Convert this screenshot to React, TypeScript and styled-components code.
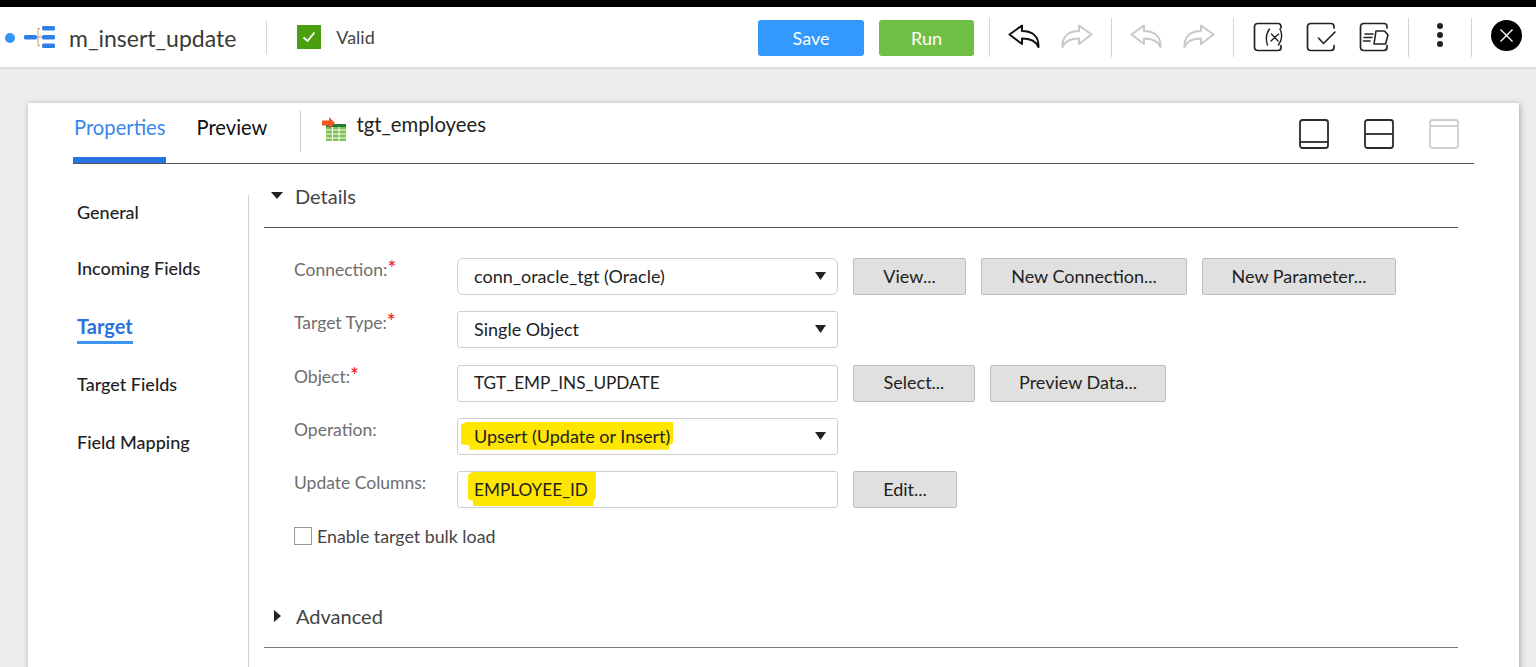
import React from "react";
import styled, { createGlobalStyle } from "styled-components";

const GlobalStyle = createGlobalStyle`
  html, body {
    margin: 0;
    padding: 0;
    background: #ededed;
    font-family: "Lato", "Open Sans", sans-serif;
    overflow: hidden;
  }
`;

const navItems = ["General", "Incoming Fields", "Target", "Target Fields", "Field Mapping"];

const Arrow = ({ flip, muted }: { flip?: boolean; muted?: boolean }) => (
  <IconSvg width="32" height="30" viewBox="0 0 32 30" fill="none" stroke={muted ? "#c9c9c9" : "#111"} strokeWidth="2" strokeLinejoin="round">
    <g transform={flip ? "translate(32 0) scale(-1 1)" : undefined}>
      <path d="M1.5 12.5 L14 3.5 V9 C24 9 31 14 30.5 25 C28 19 22 16.5 14 16.5 V22 Z" />
    </g>
  </IconSvg>
);

const ToolFrame = ({ children }: { children: React.ReactNode }) => (
  <IconSvg width="30" height="30" viewBox="0 0 30 30" fill="none" stroke="#222" strokeWidth="1.7" strokeLinecap="round" strokeLinejoin="round">
    <path d="M28 6 V4.5 C28 2.5 27 1.5 25 1.5 H5 C3 1.5 1.5 3 1.5 5 V25 C1.5 27 3 28.5 5 28.5 H25 C27 28.5 28 27.5 28 25.5 V23.5" />
    {children}
  </IconSvg>
);

const PanelLayout = ({ bar, muted }: { bar: number; muted?: boolean }) => (
  <IconSvg width="30" height="30" viewBox="0 0 30 30" fill="none" stroke={muted ? "#cfcfcf" : "#2b2b2b"} strokeWidth="1.8">
    <rect x="1" y="1" width="28" height="28" rx="2.5" />
    <path d={`M1 ${bar} H29`} />
  </IconSvg>
);

const Caret = () => (
  <CaretSvg width="11" height="8" viewBox="0 0 11 8">
    <path d="M0 0 H11 L5.5 8 Z" fill="#222" />
  </CaretSvg>
);

export default function App() {
  return (
    <Page>
      <GlobalStyle />
      <BlackStrip />
      <Header>
        <Dot />
        <IconSvg width="31" height="24" viewBox="0 0 31 24" style={{ marginLeft: 9 }}>
          <path d="M8 12 H19 M16 3.5 H14 V20.5 H16" stroke="#f08a5d" strokeWidth="1" fill="none" />
          <rect x="0" y="10" width="13" height="4.5" rx="1.5" fill="#2f7fe6" />
          <rect x="18" y="1" width="13" height="4.5" rx="1.5" fill="#2f7fe6" />
          <rect x="18" y="10" width="13" height="4.5" rx="1.5" fill="#2f7fe6" />
          <rect x="18" y="18.5" width="13" height="4.5" rx="1.5" fill="#2f7fe6" />
        </IconSvg>
        <MappingName>m_insert_update</MappingName>
        <Divider $left={30} $height={33} />
        <ValidBox>
          <svg width="14" height="12" viewBox="0 0 14 12" fill="none" stroke="#fff" strokeWidth="1.8">
            <path d="M1.5 6.5 L5.5 10 L12.5 1.5" />
          </svg>
        </ValidBox>
        <ValidText>Valid</ValidText>
        <ActionButton $bg="#3399ff" $width={106} style={{ marginLeft: "auto" }}>Save</ActionButton>
        <ActionButton $bg="#70bf45" $width={95} $left={15}>Run</ActionButton>
        <Divider $left={15} />
        <ToolSlot $left={18}><Arrow /></ToolSlot>
        <ToolSlot $left={21}><Arrow flip muted /></ToolSlot>
        <Divider $left={18} />
        <ToolSlot $left={18}><Arrow muted /></ToolSlot>
        <ToolSlot $left={21}><Arrow flip muted /></ToolSlot>
        <Divider $left={18} />
        <ToolSlot $left={19}>
          <ToolFrame>
            <path d="M16.5 7 C13.5 11 12.5 17 14.5 23 M27 7 C29.5 12 29 18 25.5 23 M18.5 12 L25 19 M25.5 12 L18 19" strokeWidth="1.4" />
          </ToolFrame>
        </ToolSlot>
        <ToolSlot $left={23}>
          <ToolFrame>
            <path d="M12.5 16 L17.5 21.5 L29 10" strokeWidth="1.6" />
          </ToolFrame>
        </ToolSlot>
        <ToolSlot $left={23}>
          <ToolFrame>
            <path d="M6 12 H14 M5 15.5 H13 M4.5 19 H11 M17 9 H25.5 L29 13 L26.5 22 H15 Z" strokeWidth="1.6" />
          </ToolFrame>
        </ToolSlot>
        <Divider $left={19} />
        <Kebab><i /><i /><i /></Kebab>
        <Divider $left={28} />
        <CloseButton>
          <svg width="15" height="15" viewBox="0 0 15 15" stroke="#fff" strokeWidth="1.4">
            <path d="M1.5 1.5 L13.5 13.5 M13.5 1.5 L1.5 13.5" />
          </svg>
        </CloseButton>
      </Header>

      <Card>
        <TabBar>
          <Tab $active>Properties</Tab>
          <Tab>Preview</Tab>
          <TabDivider />
          <IconSvg width="24" height="24" viewBox="0 0 24 24" style={{ alignSelf: "flex-start", marginTop: 14 }}>
            <rect x="4" y="7" width="20" height="17" fill="#7cc04f" />
            <path d="M4 7 H24 V10 H4 Z" fill="#217a3c" />
            <path d="M4 13 H24 M4 17 H24 M4 21 H24 M10.5 10 V24 M17 10 V24" stroke="#fff" strokeWidth="1" />
            <path d="M0 3.5 H7 V0 L13 6 L7 12 V8.5 H0 Z" fill="#f0581f" />
          </IconSvg>
          <ObjectName>tgt_employees</ObjectName>
          <LayoutIcons>
            <PanelLayout bar={23} />
            <PanelLayout bar={15} />
            <PanelLayout bar={7} muted />
          </LayoutIcons>
        </TabBar>

        <Body>
          <SideNav>
            {navItems.map((item) => (
              <NavItem key={item} $active={item === "Target"}>{item}</NavItem>
            ))}
          </SideNav>
          <Content>
            <SectionHead>
              <svg width="12" height="7" viewBox="0 0 12 7"><path d="M0 0 H12 L6 7 Z" fill="#222" /></svg>
              <SectionTitle>Details</SectionTitle>
            </SectionHead>
            <Form>
              <FormRow>
                <FieldLabel>Connection:<Req>*</Req></FieldLabel>
                <Field $round>conn_oracle_tgt (Oracle)<Caret /></Field>
                <GreyButton $width={113}>View...</GreyButton>
                <GreyButton $width={206}>New Connection...</GreyButton>
                <GreyButton $width={194}>New Parameter...</GreyButton>
              </FormRow>
              <FormRow>
                <FieldLabel>Target Type:<Req>*</Req></FieldLabel>
                <Field>Single Object<Caret /></Field>
              </FormRow>
              <FormRow>
                <FieldLabel>Object:<Req>*</Req></FieldLabel>
                <Field><Caps>TGT_EMP_INS_UPDATE</Caps></Field>
                <GreyButton $width={122}>Select...</GreyButton>
                <GreyButton $width={176}>Preview Data...</GreyButton>
              </FormRow>
              <FormRow>
                <FieldLabel>Operation:</FieldLabel>
                <Field><Marker $pad="3px 3px 3px 13px" $shift={-13}>Upsert (Update or Insert)</Marker><Caret /></Field>
              </FormRow>
              <FormRow>
                <FieldLabel>Update Columns:</FieldLabel>
                <Field><Marker $pad="6px 8px 6px 6px" $shift={-6}><Caps>EMPLOYEE_ID</Caps></Marker></Field>
                <GreyButton $width={104}>Edit...</GreyButton>
              </FormRow>
            </Form>
            <CheckRow>
              <CheckBox />
              <span>Enable target bulk load</span>
            </CheckRow>
            <AdvancedHead>
              <svg width="7" height="12" viewBox="0 0 7 12"><path d="M0 0 V12 L7 6 Z" fill="#222" /></svg>
              <SectionTitle>Advanced</SectionTitle>
            </AdvancedHead>
          </Content>
        </Body>
      </Card>
    </Page>
  );
}

const Page = styled.div`
  height: 667px;
  overflow: hidden;
  background: #ededed;
`;

const BlackStrip = styled.div`
  height: 7px;
  background: #000;
`;

const Header = styled.header`
  display: flex;
  align-items: center;
  height: 62px;
  padding: 0 14px 0 5px;
  box-sizing: border-box;
  background: #fff;
  border-bottom: 2px solid #dcdcdc;
`;

const IconSvg = styled.svg`
  display: block;
  flex: none;
`;

const Dot = styled.span`
  width: 10px;
  height: 10px;
  border-radius: 50%;
  background: #3395f5;
  flex: none;
  margin-top: 2px;
`;

const MappingName = styled.span`
  margin: 2px 0 0 14px;
  font-size: 23px;
  color: #3a3a3a;
`;

const Divider = styled.span<{ $left: number; $height?: number }>`
  width: 1px;
  height: ${(p) => p.$height ?? 39}px;
  margin-left: ${(p) => p.$left}px;
  background: #d4d4d4;
  flex: none;
`;

const ValidBox = styled.span`
  display: flex;
  align-items: center;
  justify-content: center;
  width: 24px;
  height: 24px;
  margin-left: 30px;
  background: #4a9e10;
  flex: none;
`;

const ValidText = styled.span`
  margin: 0 0 0 15px;
  font-size: 18px;
  color: #444;
`;

const ActionButton = styled.button<{ $bg: string; $width: number; $left?: number }>`
  width: ${(p) => p.$width}px;
  height: 36px;
  margin-left: ${(p) => p.$left ?? 0}px;
  margin-top: 2px;
  border: none;
  border-radius: 3px;
  background: ${(p) => p.$bg};
  color: #fff;
  font: inherit;
  font-size: 18px;
  flex: none;
`;

const ToolSlot = styled.span<{ $left: number }>`
  margin-left: ${(p) => p.$left}px;
  flex: none;
`;

const Kebab = styled.span`
  display: flex;
  flex-direction: column;
  gap: 3px;
  margin: -5px 0 0 28px;
  flex: none;

  i {
    display: block;
    width: 6px;
    height: 6px;
    border-radius: 50%;
    background: #222;
  }
`;

const CloseButton = styled.span`
  display: flex;
  align-items: center;
  justify-content: center;
  width: 31px;
  height: 31px;
  margin: -3px 0 0 19px;
  border-radius: 50%;
  background: #000;
  flex: none;
`;

const Card = styled.main`
  display: flex;
  flex-direction: column;
  margin: 34px 17px 0 28px;
  height: 600px;
  padding: 0 45px 0 45px;
  background: #fff;
  box-shadow: 1px 1px 6px rgba(0, 0, 0, 0.3);
`;

const TabBar = styled.div`
  display: flex;
  align-items: flex-start;
  height: 61px;
  box-sizing: border-box;
  border-bottom: 1px solid #555;
`;

const Tab = styled.div<{ $active?: boolean }>`
  height: 60px;
  padding: 9px 1px 0;
  box-sizing: border-box;
  margin-right: 29px;
  font-size: 20.2px;
  line-height: 30px;
  color: ${(p) => (p.$active ? "#3a86e8" : "#111")};
  border-bottom: ${(p) => (p.$active ? "6px solid #2a72e0" : "none")};
`;

const TabDivider = styled.span`
  width: 1px;
  height: 41px;
  margin: 8px 21px 0 3px;
  background: #c8c8c8;
`;

const ObjectName = styled.span`
  margin: 6px 0 0 10px;
  font-size: 20.3px;
  line-height: 30px;
  color: #222;
`;

const LayoutIcons = styled.div`
  display: flex;
  gap: 35px;
  margin: 16px 15px 0 auto;
`;

const Body = styled.div`
  display: flex;
  flex: 1;
`;

const SideNav = styled.nav`
  display: flex;
  flex-direction: column;
  align-items: flex-start;
  gap: 32px;
  width: 176px;
  margin-top: 31px;
  padding: 4px 0 0 4px;
  box-sizing: border-box;
  border-right: 1px solid #d4d4d4;
`;

const NavItem = styled.a<{ $active?: boolean }>`
  font-size: ${(p) => (p.$active ? 20 : 18)}px;
  line-height: 26px;
  color: ${(p) => (p.$active ? "#2a72e0" : "#222")};
  font-weight: ${(p) => (p.$active ? 700 : 500)};
  padding-bottom: ${(p) => (p.$active ? "2px" : "0")};
  border-bottom: ${(p) => (p.$active ? "3px solid #3a95f0" : "none")};
  margin-bottom: ${(p) => (p.$active ? "-5px" : "0")};

  &:first-child {
    margin-bottom: -2px;
  }
`;

const Content = styled.section`
  flex: 1;
  margin: 0 16px 0 15px;
`;

const SectionHead = styled.div`
  display: flex;
  align-items: center;
  gap: 12px;
  height: 64px;
  padding: 0 0 0 7px;
  box-sizing: border-box;
  border-bottom: 1px solid #555;
`;

const SectionTitle = styled.span`
  font-size: 20px;
  color: #444;
`;

const Form = styled.div`
  display: flex;
  flex-direction: column;
  gap: 16.25px;
  margin: 30px 0 0 30px;
`;

const FormRow = styled.div`
  display: flex;
  gap: 15px;
  height: 37px;
`;

const FieldLabel = styled.span`
  width: 163px;
  margin-right: -15px;
  font-size: 17.5px;
  line-height: 24px;
  color: #6e6e6e;
  flex: none;
`;

const Req = styled.span`
  color: #f01010;
  font-size: 21px;
  line-height: 0;
`;

const Field = styled.div<{ $round?: boolean }>`
  display: flex;
  align-items: center;
  width: 381px;
  height: 37px;
  padding: 0 11px 1px 16px;
  box-sizing: border-box;
  border: 1px solid #cfcfcf;
  border-radius: ${(p) => (p.$round ? 6 : 3)}px;
  font-size: 18px;
  color: #222;
  background: #fff;
  flex: none;
`;

const Caps = styled.span`
  font-size: 17.2px;
`;

const CaretSvg = styled.svg`
  margin-left: auto;
  flex: none;
`;

const Marker = styled.span<{ $pad: string; $shift: number }>`
  padding: ${(p) => p.$pad};
  margin-left: ${(p) => p.$shift}px;
  background: #ffe600;
  clip-path: polygon(0 10%, 3% 0, 100% 0, 100% 75%, 98% 85%, 98% 100%, 4% 100%, 4% 85%, 0 80%);
`;

const GreyButton = styled.button<{ $width: number }>`
  width: ${(p) => p.$width}px;
  height: 37px;
  padding: 0 0 2px;
  border: 1px solid #bdbdbd;
  border-radius: 2px;
  background: #e0e0e0;
  color: #222;
  font: inherit;
  font-size: 18px;
  flex: none;
`;

const CheckRow = styled.label`
  display: flex;
  align-items: center;
  gap: 5px;
  margin: 17px 0 0 30px;
  font-size: 17.8px;
  color: #444;
`;

const CheckBox = styled.span`
  width: 16px;
  height: 16px;
  border: 1px solid #9a9a9a;
  background: #fff;
`;

const AdvancedHead = styled.div`
  display: flex;
  align-items: center;
  gap: 15px;
  height: 63px;
  margin-top: 38px;
  padding: 0 0 0 10px;
  box-sizing: border-box;
  border-bottom: 1px solid #777;
`;
